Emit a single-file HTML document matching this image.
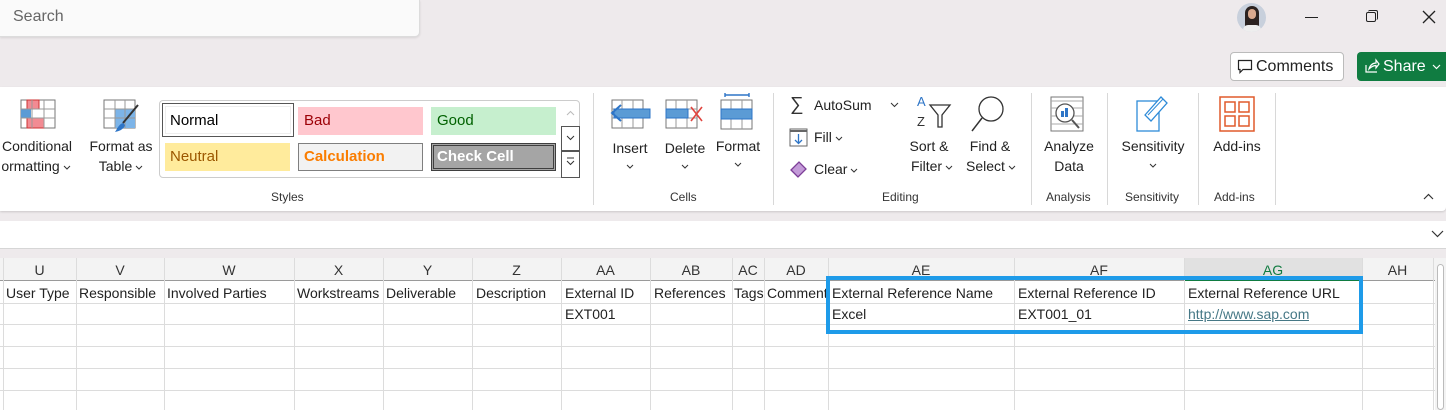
<!DOCTYPE html>
<html><head><meta charset="utf-8"><style>
*{box-sizing:border-box;margin:0;padding:0}
body{width:1446px;height:410px;overflow:hidden;background:#eeeaec;font-family:"Liberation Sans",sans-serif;position:relative;color:#222}
.a{position:absolute}
.t{position:absolute;font-size:14px;white-space:nowrap}
.lbl{position:absolute;font-size:14px;color:#222;text-align:center;white-space:nowrap;line-height:20px}
.grp{position:absolute;font-size:12px;color:#333;top:190px}
.sep{position:absolute;top:93px;width:1px;height:112px;background:#d8d8d8}
.cell{position:absolute;font-size:14px;white-space:nowrap;overflow:hidden}
.cv{display:inline-block;vertical-align:middle;margin-left:3px}
</style></head><body>
<div class="a" style="left:0;top:0;width:420px;height:37px;background:#fafafa;border:1px solid #dcdcdc;border-top:none;border-left:none;border-radius:0 0 5px 0;box-shadow:0 1px 2px rgba(0,0,0,.1)"></div>
<div class="t" style="left:13px;top:8px;font-size:16px;color:#666">Search</div>
<div class="a" style="left:1237px;top:3px;width:29px;height:29px;border-radius:50%;background:#c8d0dc;overflow:hidden"><div class="a" style="left:8px;top:3px;width:14px;height:22px;background:#2b2220;border-radius:7px 7px 3px 3px"></div><div class="a" style="left:11px;top:6px;width:8px;height:10px;background:#d9a98e;border-radius:4px"></div><div class="a" style="left:6px;top:22px;width:18px;height:10px;background:#eee;border-radius:6px"></div></div>
<div class="a" style="left:1305px;top:17px;width:13px;height:1px;background:#222"></div>
<div class="a" style="left:1366px;top:12px;width:10px;height:10px;border:1.3px solid #222;border-radius:2px"></div>
<div class="a" style="left:1368px;top:10px;width:10px;height:10px;border-top:1.3px solid #222;border-right:1.3px solid #222;border-radius:2px"></div>
<svg class="a" style="left:1422px;top:10px" width="14" height="14"><path d="M1 1L13 13M13 1L1 13" stroke="#222" stroke-width="1.3"/></svg>
<div class="a" style="left:1230px;top:52px;width:114px;height:29px;background:#fff;border:1px solid #bbb;border-radius:4px"></div>
<svg class="a" style="left:1237px;top:59px" width="16" height="15"><path d="M1.5 1.5H14.5V10.5H6L3 13.5V10.5H1.5Z" fill="none" stroke="#222" stroke-width="1.2"/></svg>
<div class="t" style="left:1256px;top:58px;font-size:16px">Comments</div>
<div class="a" style="left:1357px;top:52px;width:89px;height:29px;background:#107c41;border-radius:4px 0 0 4px"></div>
<svg class="a" style="left:1364px;top:58px" width="16" height="16"><path d="M2 7V14H13M5 11C6 7 9 5 12 5V2L15 6L12 10V7.5C9 7.5 7 9 5 11Z" fill="none" stroke="#fff" stroke-width="1.2"/></svg>
<div class="t" style="left:1383px;top:58px;font-size:16px;color:#fff">Share</div>
<svg class="a" style="left:1432px;top:64px" width="9" height="6"><path d="M1 1L4.5 4.5L8 1" fill="none" stroke="#fff" stroke-width="1.2"/></svg>
<div class="a" style="left:0;top:87px;width:1446px;height:124px;background:#fff;border-radius:0 0 4px 0;box-shadow:0 1px 2px rgba(0,0,0,.15)"></div>
<svg class="a" style="left:20px;top:99px" width="36" height="30"><rect x="1" y="1" width="34" height="28" fill="#fff" stroke="#777"/><rect x="7" y="1" width="12" height="9" fill="#f28b93" stroke="#c33"/><rect x="1" y="10" width="10" height="9" fill="#5b9bd5"/><rect x="7" y="19" width="17" height="10" fill="#f28b93" stroke="#c33"/><path d="M1 10H35M1 19H35M12 1V29M24 1V29" stroke="#999" fill="none"/></svg>
<div class="lbl" style="left:-8px;top:136px;width:90px">Conditional</div>
<div class="lbl" style="left:-12px;top:156px;width:96px">ormatting<svg class="cv" width="8" height="5"><path d="M1 1L4 4L7 1" fill="none" stroke="#333"/></svg></div>
<svg class="a" style="left:103px;top:99px" width="38" height="36"><rect x="1" y="1" width="31" height="28" fill="#fff" stroke="#777"/><rect x="12" y="10" width="20" height="19" fill="#7cb4e8"/><path d="M1 10H32M1 19H32M12 1V29M22 1V29" stroke="#999" fill="none"/><path d="M35 6L20 24" stroke="#333" stroke-width="2"/><path d="M20 24C16 25 14 30 12 33C17 32 21 30 22 26Z" fill="#2e75c7"/></svg>
<div class="lbl" style="left:82px;top:136px;width:78px">Format as</div>
<div class="lbl" style="left:82px;top:156px;width:78px">Table<svg class="cv" width="8" height="5"><path d="M1 1L4 4L7 1" fill="none" stroke="#333"/></svg></div>
<div class="a" style="left:159px;top:100px;width:421px;height:78px;border:1px solid #ccc;border-radius:4px"></div>
<div class="a" style="left:162px;top:103px;width:132px;height:34px;border:1px solid #555;background:#fff"><div class="a" style="left:2px;top:2px;right:2px;bottom:2px;border:1px solid #eee"></div></div>
<div class="t" style="left:170px;top:112px;font-size:15px;color:#000">Normal</div>
<div class="a" style="left:298px;top:107px;width:125px;height:28px;background:#ffc7ce"></div>
<div class="t" style="left:304px;top:112px;font-size:15px;color:#9c0006">Bad</div>
<div class="a" style="left:431px;top:107px;width:125px;height:28px;background:#c6efce"></div>
<div class="t" style="left:437px;top:112px;font-size:15px;color:#006100">Good</div>
<div class="a" style="left:165px;top:143px;width:125px;height:28px;background:#ffeb9c"></div>
<div class="t" style="left:170px;top:148px;font-size:15px;color:#9c5700">Neutral</div>
<div class="a" style="left:298px;top:143px;width:125px;height:28px;background:#f2f2f2;border:1px solid #7f7f7f"></div>
<div class="t" style="left:304px;top:148px;font-size:15px;color:#fa7d00;font-weight:bold">Calculation</div>
<div class="a" style="left:431px;top:143px;width:125px;height:28px;background:#a5a5a5;border:3px double #3f3f3f"></div>
<div class="t" style="left:437px;top:148px;font-size:15px;color:#fff;font-weight:bold">Check Cell</div>
<div class="a" style="left:561px;top:126px;width:19px;height:25px;border:1px solid #555;background:#fff"></div>
<div class="a" style="left:561px;top:151px;width:19px;height:27px;border:1px solid #555;background:#fff"></div>
<svg class="a" style="left:566px;top:110px" width="9" height="6"><path d="M1 5L4.5 1.5L8 5" fill="none" stroke="#bbb"/></svg>
<svg class="a" style="left:566px;top:135px" width="9" height="6"><path d="M1 1L4.5 4.5L8 1" fill="none" stroke="#333"/></svg>
<svg class="a" style="left:566px;top:157px" width="9" height="10"><path d="M1 1H8M1 4L4.5 7.5L8 4" fill="none" stroke="#333"/></svg>
<div class="grp" style="left:271px">Styles</div>
<div class="sep" style="left:593px"></div>
<svg class="a" style="left:609px;top:99px" width="42" height="32"><rect x="3" y="1" width="31" height="28" fill="#fff" stroke="#777"/><path d="M3 10H34M3 19H34M13 1V29M24 1V29" stroke="#999"/><rect x="5" y="10" width="36" height="9" fill="#5b9bd5" stroke="#2e75c7"/><path d="M12 6L3 14L12 22" fill="none" stroke="#2e75c7" stroke-width="2"/></svg>
<div class="lbl" style="left:605px;top:138px;width:50px">Insert</div>
<svg class="a" style="left:626px;top:164px" width="8" height="5"><path d="M1 1L4 4L7 1" fill="none" stroke="#333"/></svg>
<svg class="a" style="left:665px;top:99px" width="40" height="32"><rect x="1" y="1" width="31" height="28" fill="#fff" stroke="#777"/><path d="M1 10H32M1 19H32M11 1V29M22 1V29" stroke="#999"/><rect x="1" y="10" width="22" height="9" fill="#5b9bd5" stroke="#2e75c7"/><path d="M26 8L37 22M37 8L26 22" stroke="#e0443e" stroke-width="1.6"/></svg>
<div class="lbl" style="left:660px;top:138px;width:50px">Delete</div>
<svg class="a" style="left:681px;top:164px" width="8" height="5"><path d="M1 1L4 4L7 1" fill="none" stroke="#333"/></svg>
<svg class="a" style="left:719px;top:93px" width="36" height="38"><path d="M6 2H30M6 0V4M30 0V4" stroke="#2e75c7" stroke-width="1.4"/><rect x="2" y="7" width="31" height="29" fill="#fff" stroke="#777"/><path d="M2 16H33M2 26H33M12 7V36M23 7V36" stroke="#999"/><rect x="2" y="16" width="31" height="10" fill="#5b9bd5" stroke="#2e75c7"/></svg>
<div class="lbl" style="left:712px;top:136px;width:52px">Format</div>
<svg class="a" style="left:734px;top:162px" width="8" height="5"><path d="M1 1L4 4L7 1" fill="none" stroke="#333"/></svg>
<div class="grp" style="left:670px">Cells</div>
<div class="sep" style="left:773px"></div>
<div class="t" style="left:790px;top:94px;font-size:19px;color:#333">∑</div>
<div class="lbl" style="left:814px;top:95px;text-align:left">AutoSum</div>
<svg class="a" style="left:890px;top:102px" width="9" height="6"><path d="M1 1L4.5 4.5L8 1" fill="none" stroke="#333"/></svg>
<svg class="a" style="left:789px;top:128px" width="20" height="20"><rect x="1" y="1" width="17" height="17" fill="#fff" stroke="#666"/><path d="M1 3H18" stroke="#666" stroke-width="2"/><path d="M9.5 6V15M6 12L9.5 15.5L13 12" stroke="#2e75c7" fill="none" stroke-width="1.3"/></svg>
<div class="lbl" style="left:814px;top:127px;text-align:left">Fill<svg class="cv" width="8" height="5"><path d="M1 1L4 4L7 1" fill="none" stroke="#333"/></svg></div>
<svg class="a" style="left:789px;top:159px" width="20" height="20"><path d="M2 11L10 3L17 10L9 18Z" fill="#c39bd8" stroke="#7d3f98" stroke-width="1.3"/><path d="M2 11L9 18" stroke="#7d3f98"/></svg>
<div class="lbl" style="left:814px;top:159px;text-align:left">Clear<svg class="cv" width="8" height="5"><path d="M1 1L4 4L7 1" fill="none" stroke="#333"/></svg></div>
<div class="t" style="left:917px;top:94px;font-size:13px;color:#2e75c7">A</div>
<div class="t" style="left:917px;top:114px;font-size:13px;color:#333">Z</div>
<svg class="a" style="left:928px;top:103px" width="24" height="26"><path d="M2 2H22L14 12V24H10V12Z" fill="none" stroke="#333" stroke-width="1.3"/></svg>
<div class="lbl" style="left:904px;top:136px;width:50px">Sort &amp;</div>
<div class="lbl" style="left:904px;top:156px;width:56px">Filter<svg class="cv" width="8" height="5"><path d="M1 1L4 4L7 1" fill="none" stroke="#333"/></svg></div>
<svg class="a" style="left:969px;top:95px" width="42" height="40"><circle cx="22" cy="14" r="12" fill="none" stroke="#333" stroke-width="1.3"/><path d="M13 23L3 36" stroke="#333" stroke-width="1.5"/></svg>
<div class="lbl" style="left:965px;top:136px;width:50px">Find &amp;</div>
<div class="lbl" style="left:962px;top:156px;width:58px">Select<svg class="cv" width="8" height="5"><path d="M1 1L4 4L7 1" fill="none" stroke="#333"/></svg></div>
<div class="grp" style="left:882px">Editing</div>
<div class="sep" style="left:1031px"></div>
<svg class="a" style="left:1049px;top:96px" width="40" height="38"><rect x="2" y="1" width="32" height="34" fill="#fff" stroke="#777"/><path d="M2 5H34M2 12H34M2 20H34M2 28H34" stroke="#aaa"/><circle cx="16" cy="17" r="9" fill="#fff" stroke="#555" stroke-width="1.3"/><rect x="12" y="15" width="3" height="6" fill="#2e75c7"/><rect x="16" y="12" width="3" height="9" fill="#2e75c7"/><path d="M23 24L30 32" stroke="#555" stroke-width="2"/></svg>
<div class="lbl" style="left:1039px;top:136px;width:60px">Analyze</div>
<div class="lbl" style="left:1039px;top:156px;width:60px">Data</div>
<div class="grp" style="left:1046px">Analysis</div>
<div class="sep" style="left:1107px"></div>
<svg class="a" style="left:1135px;top:93px" width="40" height="40"><rect x="2" y="8" width="22" height="30" fill="#fff" stroke="#2e8bd8" stroke-width="1.3"/><path d="M10 22L26 4L32 10L16 28Z" fill="#fff" stroke="#2e8bd8" stroke-width="1.3"/><path d="M13 22L28 6" stroke="#2e8bd8"/></svg>
<div class="lbl" style="left:1113px;top:136px;width:80px">Sensitivity</div>
<svg class="a" style="left:1149px;top:163px" width="8" height="5"><path d="M1 1L4 4L7 1" fill="none" stroke="#333"/></svg>
<div class="grp" style="left:1125px">Sensitivity</div>
<div class="sep" style="left:1198px"></div>
<svg class="a" style="left:1219px;top:96px" width="36" height="36"><rect x="1" y="1" width="34" height="34" fill="none" stroke="#e05a2b" stroke-width="1.5"/><rect x="6" y="6" width="10" height="10" fill="none" stroke="#e05a2b" stroke-width="1.5"/><rect x="20" y="6" width="10" height="10" fill="none" stroke="#e05a2b" stroke-width="1.5"/><rect x="6" y="20" width="10" height="10" fill="none" stroke="#e05a2b" stroke-width="1.5"/><rect x="20" y="20" width="10" height="10" fill="none" stroke="#e05a2b" stroke-width="1.5"/></svg>
<div class="lbl" style="left:1205px;top:136px;width:64px">Add-ins</div>
<div class="grp" style="left:1214px">Add-ins</div>
<div class="sep" style="left:1275px"></div>
<svg class="a" style="left:1423px;top:193px" width="11" height="7"><path d="M1 6L5.5 1.5L10 6" fill="none" stroke="#333" stroke-width="1.2"/></svg>
<div class="a" style="left:0;top:221px;width:1446px;height:28px;background:#fff;border-bottom:1px solid #d6d6d6"></div>
<svg class="a" style="left:1431px;top:230px" width="13" height="8"><path d="M1 1L6.5 6.5L12 1" fill="none" stroke="#333" stroke-width="1.2"/></svg>
<div class="a" style="left:0;top:258px;width:1435px;height:152px;background:#fff"></div>
<div class="a" style="left:0;top:258px;width:1435px;height:23px;background:#f3f3f3;border-bottom:1px solid #9a9a9a"></div>
<div class="a" style="left:1184px;top:258px;width:178px;height:23px;background:#e1e1e1;border-bottom:2px solid #107c41"></div>
<div class="a" style="left:1435px;top:258px;width:11px;height:152px;background:#f3f3f3"></div>
<div class="a" style="left:1437px;top:264px;width:7px;height:146px;border:1px solid #bbb;border-radius:4px;background:#fff"></div>
<svg class="a" style="left:0;top:258px" width="1435" height="152">
<g stroke="#dcdcdc" stroke-width="1">
<path d="M3.5 0V152M76.5 0V152M164.5 0V152M294.5 0V152M383.5 0V152M472.5 0V152M561.5 0V152M650.5 0V152M732.5 0V152M764.5 0V152M828.5 0V152M1014.5 0V152M1184.5 0V152M1362.5 0V152M1433.5 0V152"/>
<path d="M0 45.5H1435M0 66.5H1435M0 88.5H1435M0 110.5H1435M0 132.5H1435"/>
</g></svg>
<div class="a" style="left:0;top:258px;width:1435px;height:23px">
<div class="t" style="left:3px;width:73px;top:4px;text-align:center;color:#333">U</div>
<div class="t" style="left:76px;width:88px;top:4px;text-align:center;color:#333">V</div>
<div class="t" style="left:164px;width:130px;top:4px;text-align:center;color:#333">W</div>
<div class="t" style="left:294px;width:89px;top:4px;text-align:center;color:#333">X</div>
<div class="t" style="left:383px;width:89px;top:4px;text-align:center;color:#333">Y</div>
<div class="t" style="left:472px;width:89px;top:4px;text-align:center;color:#333">Z</div>
<div class="t" style="left:561px;width:89px;top:4px;text-align:center;color:#333">AA</div>
<div class="t" style="left:650px;width:82px;top:4px;text-align:center;color:#333">AB</div>
<div class="t" style="left:732px;width:32px;top:4px;text-align:center;color:#333">AC</div>
<div class="t" style="left:764px;width:64px;top:4px;text-align:center;color:#333">AD</div>
<div class="t" style="left:828px;width:186px;top:4px;text-align:center;color:#333">AE</div>
<div class="t" style="left:1014px;width:170px;top:4px;text-align:center;color:#333">AF</div>
<div class="t" style="left:1184px;width:178px;top:4px;text-align:center;color:#107c41">AG</div>
<div class="t" style="left:1362px;width:71px;top:4px;text-align:center;color:#333">AH</div>
</div>
<div class="cell" style="left:6px;top:285px;width:70px">User Type</div>
<div class="cell" style="left:79px;top:285px;width:85px">Responsible</div>
<div class="cell" style="left:167px;top:285px">Involved Parties</div>
<div class="cell" style="left:297px;top:285px;width:86px">Workstreams</div>
<div class="cell" style="left:386px;top:285px;width:86px">Deliverable</div>
<div class="cell" style="left:476px;top:285px;width:85px">Description</div>
<div class="cell" style="left:565px;top:285px;width:85px">External ID</div>
<div class="cell" style="left:654px;top:285px;width:78px">References</div>
<div class="cell" style="left:734px;top:285px;width:30px">Tags</div>
<div class="cell" style="left:767px;top:285px;width:61px">Comments</div>
<div class="cell" style="left:832px;top:285px">External Reference Name</div>
<div class="cell" style="left:1018px;top:285px">External Reference ID</div>
<div class="cell" style="left:1188px;top:285px">External Reference URL</div>
<div class="cell" style="left:565px;top:306px">EXT001</div>
<div class="cell" style="left:832px;top:306px">Excel</div>
<div class="cell" style="left:1018px;top:306px">EXT001_01</div>
<div class="cell" style="left:1188px;top:306px;color:#467886;text-decoration:underline">http://www.sap.com</div>
<div class="a" style="left:826px;top:276px;width:537px;height:58px;border:4px solid #1e9be9"></div>
</body></html>
